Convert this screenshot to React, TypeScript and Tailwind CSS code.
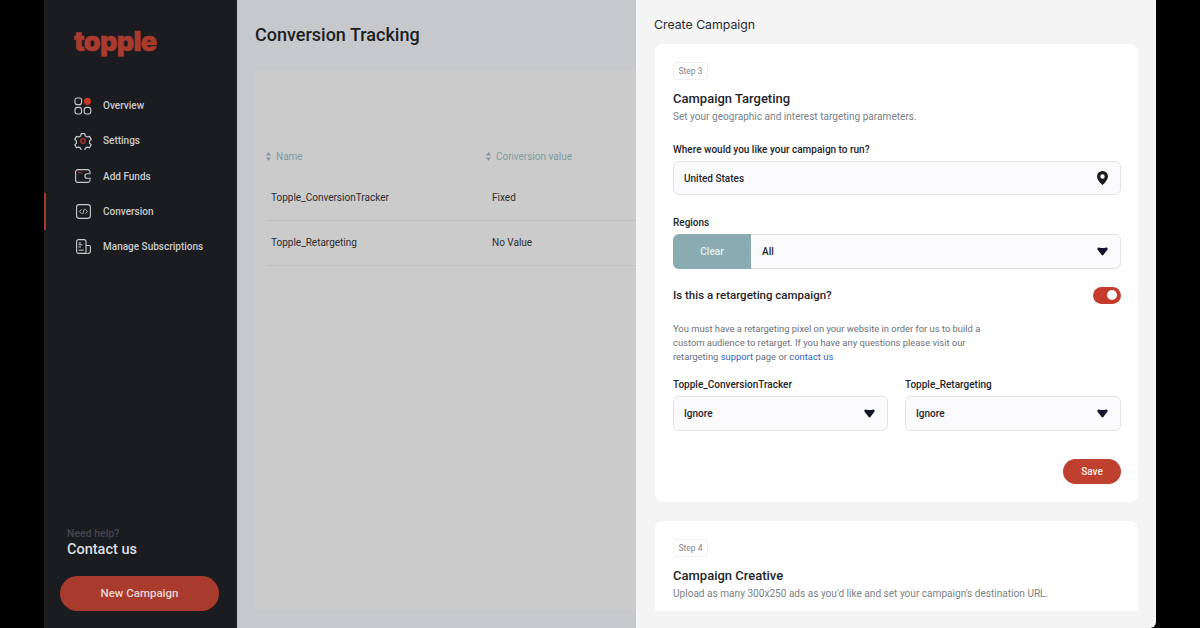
const font = { fontFamily: "Roboto, 'Liberation Sans', sans-serif" }

function OverviewIcon() {
  return (
    <svg width="18" height="18" viewBox="0 0 18 18" fill="none" stroke="#c9cacc" strokeWidth="1.1">
      <rect x="1" y="1" width="6.6" height="6.6" rx="2" />
      <circle cx="13.4" cy="4.3" r="3.6" fill="#c0392b" stroke="none" />
      <rect x="1" y="10.4" width="6.6" height="6.6" rx="2.4" />
      <rect x="10.2" y="10.4" width="6.6" height="6.6" rx="2.4" />
    </svg>
  )
}

function SettingsIcon() {
  return (
    <svg width="16" height="16" viewBox="0 0 24 24" fill="none" stroke="#c9cacc" strokeWidth="1.6" strokeLinejoin="round" className="scale-[1.12]">
      <path d="M9.6 2.2h4.8l.7 3 2.6 1.5 3-.9 2.3 4-2.2 2.2v3l2.2 2.1-2.3 4-3-.9-2.6 1.5-.7 3H9.6l-.7-3-2.6-1.5-3 .9-2.3-4 2.2-2.1v-3L1 9.8l2.3-4 3 .9 2.6-1.5z" />
      <circle cx="12" cy="12" r="3" stroke="#a33a30" strokeWidth="2" />
    </svg>
  )
}

function WalletIcon() {
  return (
    <svg width="16" height="14" viewBox="0 0 16 14" fill="none" stroke="#c9cacc" strokeWidth="1.1" strokeLinecap="round">
      <path d="M15 3.5V3a2.4 2.4 0 0 0-2.4-2.4H3A2.4 2.4 0 0 0 .6 3v8A2.4 2.4 0 0 0 3 13.4h9.6A2.4 2.4 0 0 0 15 11v-.5" />
      <path d="M15.4 4.7h-3.2a2.3 2.3 0 0 0 0 4.6h3.2" />
      <path d="M3.6 3.6h3" stroke="#a33a30" />
    </svg>
  )
}

function CodeIcon() {
  return (
    <svg width="15" height="15" viewBox="0 0 15 15" fill="none" stroke="#c9cacc" strokeWidth="1.1" strokeLinecap="round" strokeLinejoin="round">
      <rect x="0.6" y="0.6" width="13.8" height="13.8" rx="2.6" />
      <path d="M5.2 5.6 3.6 7.5l1.6 1.9M9.8 5.6l1.6 1.9-1.6 1.9M8.2 5.2 6.8 9.8" strokeWidth="0.9" />
    </svg>
  )
}

function ReceiptIcon() {
  return (
    <svg width="15" height="15" viewBox="0 0 15 15" fill="none" stroke="#c9cacc" strokeWidth="1.1" strokeLinecap="round" strokeLinejoin="round">
      <path d="M10 14.4H2.4A1.8 1.8 0 0 1 .6 12.6V2.4A1.8 1.8 0 0 1 2.4.6h5.8A1.8 1.8 0 0 1 10 2.4v12a1.6 1.6 0 0 0 2.2 0h.4a1.8 1.8 0 0 0 1.8-1.8V7.5a1 1 0 0 0-1-1H10" />
      <path d="M3 4h1.6M3 5.8h3M3 8h1.6M3 11.2h4.4" strokeWidth="1" />
    </svg>
  )
}

function SortIcon() {
  return (
    <svg width="5" height="9" viewBox="0 0 5 9" fill="#7f9a9c">
      <path d="M2.5 0 5 3.6H0zM2.5 9 0 5.4h5z" />
    </svg>
  )
}

function Caret() {
  return (
    <svg width="11" height="9" viewBox="0 0 11 9" fill="#14142b">
      <path d="M2 .5C3.5 1.2 7.5 1.2 9 .5c1.5-.3 2 1 1.4 2.3L6.3 8c-.4.6-1.2.6-1.6 0L.6 2.8C0 1.5.5.2 2 .5z" />
    </svg>
  )
}

function Pin() {
  return (
    <svg width="11" height="14" viewBox="0 0 11 14">
      <path fillRule="evenodd" fill="#1b1c22" d="M5.5 0A5.4 5.4 0 0 1 11 5.4c0 2.8-2.4 5.6-5.5 8.6C2.4 11 0 8.2 0 5.4A5.4 5.4 0 0 1 5.5 0zm0 3.3a2.2 2.2 0 1 0 0 4.4 2.2 2.2 0 0 0 0-4.4z" />
    </svg>
  )
}

function NavItem({ icon, label, active }: { icon: React.ReactNode; label: string; active?: boolean }) {
  return (
    <div className="relative flex h-[35.25px] items-center pl-[30px]">
      {active && <div className="absolute left-0 top-[-1px] h-[37px] w-[2px] bg-[#a33a30]" />}
      <div className="flex w-[18px] items-center justify-center">{icon}</div>
      <span className="ml-[11px] text-[10px] font-medium text-[#c9cacc]">{label}</span>
    </div>
  )
}

function Select({ value, className }: { value: string; className?: string }) {
  return (
    <div className={`flex h-[35px] items-center justify-between rounded-md border border-[#e2e2e8] bg-[#fbfbfd] pl-[10px] pr-[12px] ${className ?? ""}`}>
      <span className="text-[10px] font-medium text-[#26272c]">{value}</span>
      <Caret />
    </div>
  )
}

function StepBadge({ label }: { label: string }) {
  return (
    <div className="flex h-[18px] w-[35px] items-center justify-center rounded-[3px] border border-[#f0f0f3] text-[8.5px] text-[#83868d]">
      {label}
    </div>
  )
}

export default function App() {
  return (
    <div className="flex h-[628px] w-[1200px] overflow-hidden bg-black pl-[44px] pr-[44px]" style={font}>
      {/* Sidebar */}
      <aside className="flex w-[193px] shrink-0 flex-col bg-[#1b1c20]">
        <div
          className="ml-[30px] mt-[24px] h-[38px] text-[27px] font-black leading-[36px] tracking-[-0.7px] text-[#a93a2e] [-webkit-text-stroke:0.5px_#a93a2e]"
          style={{ fontFamily: "Inter, sans-serif" }}
        >
          topple
        </div>
        <nav className="mt-[26px] flex flex-col">
          <NavItem icon={<OverviewIcon />} label="Overview" />
          <NavItem icon={<SettingsIcon />} label="Settings" />
          <NavItem icon={<WalletIcon />} label="Add Funds" />
          <NavItem icon={<CodeIcon />} label="Conversion" active />
          <NavItem icon={<ReceiptIcon />} label="Manage Subscriptions" />
        </nav>
        <div className="mt-auto pl-[23px]">
          <p className="text-[10.5px] font-medium leading-[13px] text-[#45464b]">Need help?</p>
          <p className="mt-[1px] text-[14.5px] font-medium leading-[18px] text-[#dddee0]">Contact us</p>
        </div>
        <button className="mb-[17px] ml-[16px] mt-[17px] h-[35px] w-[159px] rounded-full bg-[#a93a2e] text-[11.5px] font-medium text-[#ead7d3]">
          New Campaign
        </button>
      </aside>

      {/* Dimmed page behind the panel */}
      <main className="w-[399px] shrink-0 overflow-hidden bg-[#c7c8cc] pl-[18px]">
        <h1 className="mt-[23px] h-[24px] text-[18px] font-medium leading-[24px] text-[#1c1d21]">Conversion Tracking</h1>
        <div className="mt-[23px] h-[540px] w-[600px] rounded-sm bg-[#cbcbcc] pl-[11px]">
          <div className="flex h-[106px] items-end pb-[12px] pt-[1px] text-[10px] text-[#7f9a9c]">
            <div className="flex w-[220px] items-center gap-[5px]">
              <SortIcon />
              <span>Name</span>
            </div>
            <div className="flex items-center gap-[5px]">
              <SortIcon />
              <span>Conversion value</span>
            </div>
          </div>
          <div className="flex h-[45px] items-center border-b border-[#bfc0c1] pb-[2px] pl-[5px] text-[10px] text-[#2b2c30]">
            <span className="w-[221px]">Topple_ConversionTracker</span>
            <span>Fixed</span>
          </div>
          <div className="flex h-[45px] items-center border-b border-[#bfc0c1] pb-[2px] pl-[5px] text-[10px] text-[#2b2c30]">
            <span className="w-[221px]">Topple_Retargeting</span>
            <span>No Value</span>
          </div>
        </div>
      </main>

      {/* Create campaign panel */}
      <section className="flex w-[520px] shrink-0 flex-col rounded-br-md bg-[#f4f4f5] pl-[19px] pr-[18px]">
        <h2 className="-ml-px mt-[16px] h-[18px] text-[12.3px] leading-[18px] text-[#2b2c30]" style={{ fontFamily: "Inter, sans-serif" }}>
          Create Campaign
        </h2>

        <div className="mt-[10px] h-[458px] rounded-lg bg-white pl-[18px] pr-[17px] pt-[18px]">
          <StepBadge label="Step 3" />
          <h3 className="mt-[10px] text-[13px] font-medium leading-[18px] text-[#24252a]">Campaign Targeting</h3>
          <p className="mt-[2px] text-[10.08px] leading-[14px] text-[#7c7f87]">Set your geographic and interest targeting parameters.</p>

          <p className="mt-[19px] text-[10px] font-medium leading-[14px] text-[#24252a]">Where would you like your campaign to run?</p>
          <div className="mt-[4px] flex h-[34px] items-center justify-between rounded-md border border-[#e2e2e8] bg-[#fbfbfd] pl-[10px] pr-[12px]">
            <span className="text-[10px] font-medium text-[#26272c]">United States</span>
            <Pin />
          </div>

          <p className="mt-[21px] text-[10px] font-medium leading-[14px] text-[#24252a]">Regions</p>
          <div className="mt-[4px] flex h-[35px] rounded-md border border-[#e2e2e8] bg-[#fbfbfd]">
            <div className="-my-px -ml-px flex w-[78px] items-center justify-center rounded-l-md bg-[#8aabb1] text-[10px] font-medium text-[#e6eff0]">
              Clear
            </div>
            <div className="flex flex-1 items-center justify-between pl-[11px] pr-[12px]">
              <span className="text-[10px] font-medium text-[#26272c]">All</span>
              <Caret />
            </div>
          </div>

          <div className="mt-[17px] flex h-[18px] items-center justify-between">
            <span className="pt-[2px] text-[11.5px] font-medium text-[#24252a]">Is this a retargeting campaign?</span>
            <div className="flex h-[17px] w-[28px] items-center justify-end rounded-full bg-[#c63c2c] pr-[4px]">
              <div className="h-[10px] w-[10px] rounded-full bg-white" />
            </div>
          </div>

          <div className="mt-[18px] w-[320px] text-[9.4px] leading-[14px] text-[#6d7078]">
            <p>You must have a retargeting pixel on your website in order for us to build a custom audience to retarget. If you have any questions please visit our</p>
            <div className="flex gap-[2.4px]">
              <span>retargeting</span>
              <span className="text-[#2f63c8]">support</span>
              <span>page or</span>
              <span className="text-[#2f63c8]">contact us</span>
            </div>
          </div>

          <div className="mt-[14px] grid grid-cols-[215px_216px] gap-x-[17px]">
            <div>
              <p className="text-[10px] font-medium leading-[14px] text-[#24252a]">Topple_ConversionTracker</p>
              <Select value="Ignore" className="mt-[4px]" />
            </div>
            <div>
              <p className="text-[10px] font-medium leading-[14px] text-[#24252a]">Topple_Retargeting</p>
              <Select value="Ignore" className="mt-[4px]" />
            </div>
          </div>

          <div className="mt-[28px] flex justify-end">
            <button className="h-[25px] w-[58px] rounded-full bg-[#c0402f] text-[10px] font-medium text-[#fbeeea]">Save</button>
          </div>
        </div>

        <div className="mt-[19px] h-[90px] rounded-t-lg bg-white pl-[18px] pr-[17px] pt-[18px]">
          <StepBadge label="Step 4" />
          <h3 className="mt-[10px] text-[13px] font-medium leading-[18px] text-[#24252a]">Campaign Creative</h3>
          <p className="mt-[2px] text-[10.08px] leading-[14px] text-[#7c7f87]">
            Upload as many 300x250 ads as you'd like and set your campaign's destination URL.
          </p>
        </div>
      </section>
    </div>
  )
}
